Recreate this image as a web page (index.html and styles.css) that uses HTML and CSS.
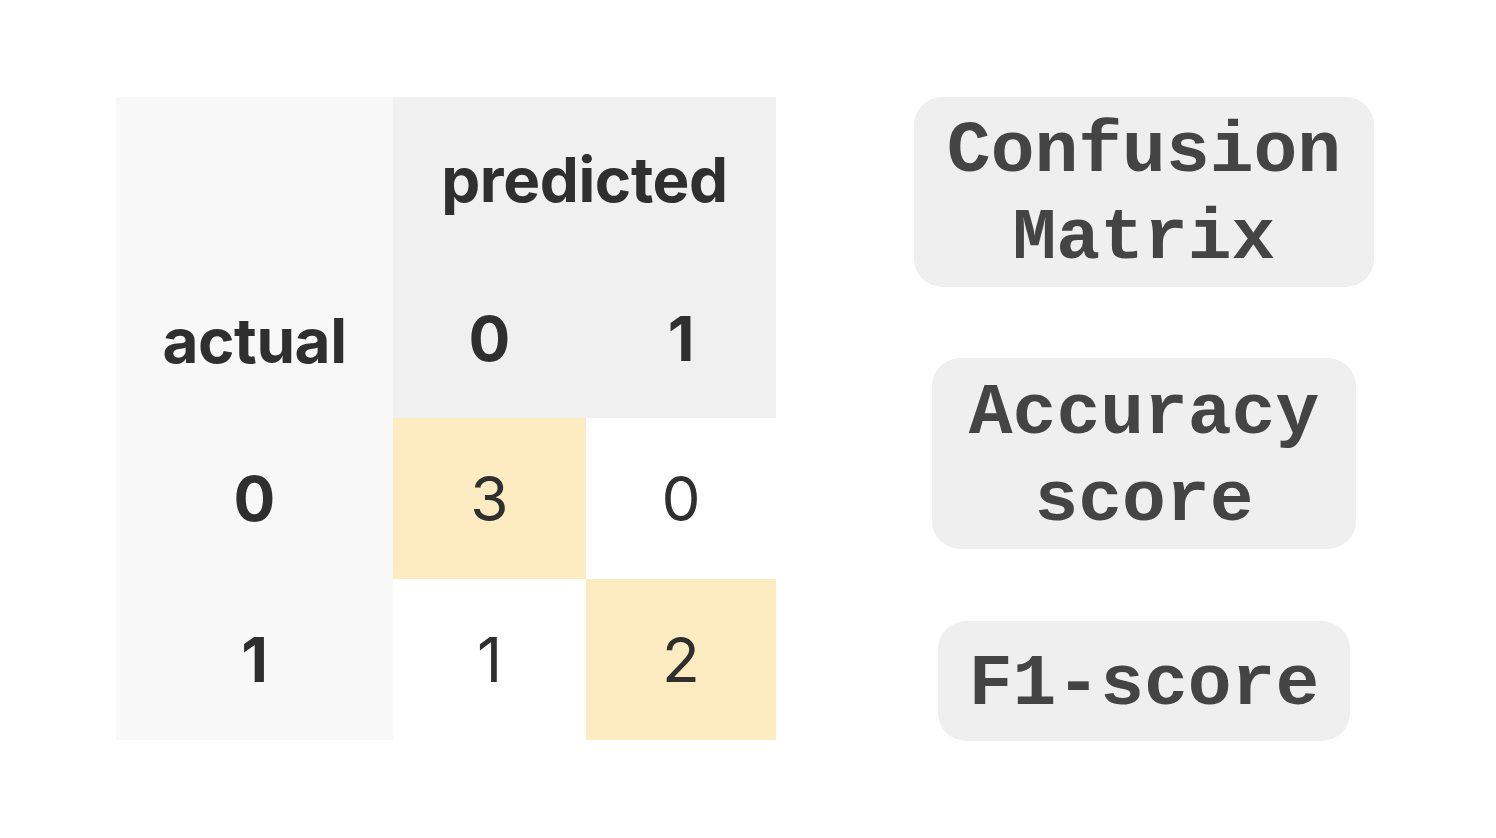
FILE: index.html
```html
<!DOCTYPE html>
<html>
<head>
<meta charset="utf-8">
<link rel="stylesheet" href="styles.css">
</head>
<body>
<main class="page">
  <div class="matrix">
    <div class="cell side corner"></div>
    <div class="cell head span2 label">predicted</div>
    <div class="cell side label">actual</div>
    <div class="cell head bold">0</div>
    <div class="cell head bold">1</div>
    <div class="cell side bold">0</div>
    <div class="cell hit">3</div>
    <div class="cell plain">0</div>
    <div class="cell side bold">1</div>
    <div class="cell plain">1</div>
    <div class="cell hit">2</div>
  </div>
  <div class="terms">
    <div class="pill pill-cm">Confusion<br>Matrix</div>
    <div class="pill pill-acc">Accuracy<br>score</div>
    <div class="pill pill-f1">F1-score</div>
  </div>
</main>
</body>
</html>
```
FILE: styles.css
```css
html, body {
  margin: 0;
  padding: 0;
  background: #ffffff;
}
.page {
  width: 1496px;
  height: 838px;
  display: flex;
  align-items: flex-start;
  padding: 97px 0 0 116px;
  box-sizing: border-box;
}
.matrix {
  display: grid;
  grid-template-columns: 277px 193px 190px;
  grid-template-rows: 161px 160px 161px 161px;
  font-family: Inter, "Noto Sans", sans-serif;
  color: #2f2f2f;
  font-size: 62px;
}
.cell {
  display: flex;
  align-items: center;
  justify-content: center;
}
.side { background: #f8f8f8; }
.head { background: #f0f0f0; }
.hit { background: #fdebc1; }
.plain { background: #ffffff; }
.span2 { grid-column: span 2; }
.label { font-weight: 700; letter-spacing: -0.4px; padding-top: 4px; }
.bold { font-weight: 700; }
.terms {
  margin-left: 138px;
  width: 460px;
  display: flex;
  flex-direction: column;
  align-items: center;
}
.pill {
  background: #efefef;
  border-radius: 28px;
  font-family: "Liberation Mono", "Courier New", monospace;
  font-weight: 700;
  font-size: 73px;
  line-height: 87px;
  color: #444444;
  text-align: center;
  display: flex;
  align-items: center;
  justify-content: center;
  padding-top: 6px;
  box-sizing: border-box;
}
.pill-cm { width: 460px; height: 190px; }
.pill-acc { width: 424px; height: 191px; margin-top: 71px; }
.pill-f1 { width: 412px; height: 120px; margin-top: 72px; }
```
